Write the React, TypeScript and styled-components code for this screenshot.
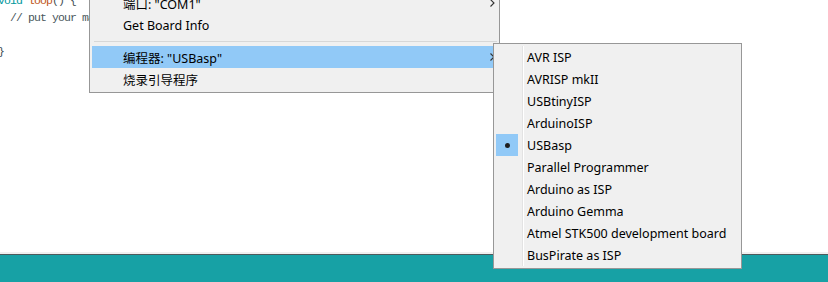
import styled, { createGlobalStyle } from 'styled-components';

const GlobalStyle = createGlobalStyle`
  html, body {
    margin: 0;
    padding: 0;
    width: 828px;
    height: 282px;
    overflow: hidden;
    background: #ffffff;
  }
`;

const Window = styled.div`
  position: relative;
  width: 828px;
  height: 282px;
  display: flex;
  flex-direction: column;
  overflow: hidden;
`;

const Editor = styled.div`
  height: 252px;
  background: #ffffff;
  overflow: hidden;
`;

const Code = styled.pre`
  margin: -8px 0 0 -2px;
  font-family: 'Liberation Mono', 'Courier New', monospace;
  font-size: 11.5px;
  letter-spacing: -0.9px;
  line-height: 17px;
  color: #434f54;
`;

const Kw = styled.span<{ $c: string }>`
  color: ${(p) => p.$c};
`;

const Strip = styled.div`
  height: 2px;
  background: #f0f0f0;
  border-bottom: 1px solid #4d5a5c;
`;

const StatusBar = styled.div`
  flex: 1;
  background: #17a1a5;
`;

const Menu = styled.div<{ $left: number; $top: number; $width: number }>`
  position: absolute;
  left: ${(p) => p.$left}px;
  top: ${(p) => p.$top}px;
  width: ${(p) => p.$width}px;
  box-sizing: border-box;
  background: #f0f0f0;
  border: 1px solid #979797;
  padding: 2px;
  font-family: 'Noto Sans', 'Noto Sans CJK SC', sans-serif;
  font-size: 12.5px;
  color: #000000;
`;

const Row = styled.div<{ $active?: boolean }>`
  position: relative;
  height: 22px;
  display: flex;
  align-items: center;
  padding-left: 31px;
  background: ${(p) => (p.$active ? '#91c9f7' : 'transparent')};
  white-space: nowrap;
`;

const Arrow = styled.svg`
  position: absolute;
  right: 2px;
  top: 7px;
`;

const Separator = styled.div`
  height: 10px;
  display: flex;
  align-items: center;
  padding-left: 2px;

  &::after {
    content: '';
    flex: 1;
    height: 1px;
    background: #d7d7d7;
  }
`;

const SubList = styled.div`
  background: linear-gradient(
    to right,
    transparent 26px,
    #e3e3e3 26px,
    #e3e3e3 27px,
    #ffffff 27px,
    #ffffff 28px,
    transparent 28px
  );
`;

const SubRow = styled.div`
  height: 22px;
  display: flex;
  align-items: center;
  white-space: nowrap;
`;

const Check = styled.div<{ $on: boolean }>`
  width: 22px;
  height: 22px;
  margin-right: 9px;
  display: flex;
  align-items: center;
  justify-content: center;
  background: ${(p) => (p.$on ? '#91c9f7' : 'transparent')};

  &::after {
    content: '';
    display: ${(p) => (p.$on ? 'block' : 'none')};
    width: 5px;
    height: 5px;
    border-radius: 50%;
    background: #1e1e1e;
  }
`;

const Chevron = () => (
  <Arrow width="5" height="8" viewBox="0 0 5 8">
    <path d="M0.5 0.5 L4 4 L0.5 7.5" fill="none" stroke="#333" strokeWidth="1.1" />
  </Arrow>
);

const programmers = [
  'AVR ISP',
  'AVRISP mkII',
  'USBtinyISP',
  'ArduinoISP',
  'USBasp',
  'Parallel Programmer',
  'Arduino as ISP',
  'Arduino Gemma',
  'Atmel STK500 development board',
  'BusPirate as ISP',
];

export default function App() {
  return (
    <>
      <GlobalStyle />
      <Window>
        <Editor>
          <Code>
            <Kw $c="#00979c">void</Kw> <Kw $c="#c0561a">loop</Kw>() {'{'}
            {'\n'}  <Kw $c="#4a575c">// put your main code here, to run repeatedly:</Kw>
            {'\n'}
            {'\n'}
            {'}'}
          </Code>
        </Editor>
        <Strip />
        <StatusBar />

        <Menu $left={89} $top={-11} $width={411}>
          <Row>
            端口: "COM1"
            <Chevron />
          </Row>
          <Row>Get Board Info</Row>
          <Separator />
          <Row $active>
            编程器: "USBasp"
            <Chevron />
          </Row>
          <Row>烧录引导程序</Row>
        </Menu>

        <Menu $left={493} $top={43} $width={249}>
          <SubList>
            {programmers.map((name) => (
              <SubRow key={name}>
                <Check $on={name === 'USBasp'} />
                {name}
              </SubRow>
            ))}
          </SubList>
        </Menu>
      </Window>
    </>
  );
}
